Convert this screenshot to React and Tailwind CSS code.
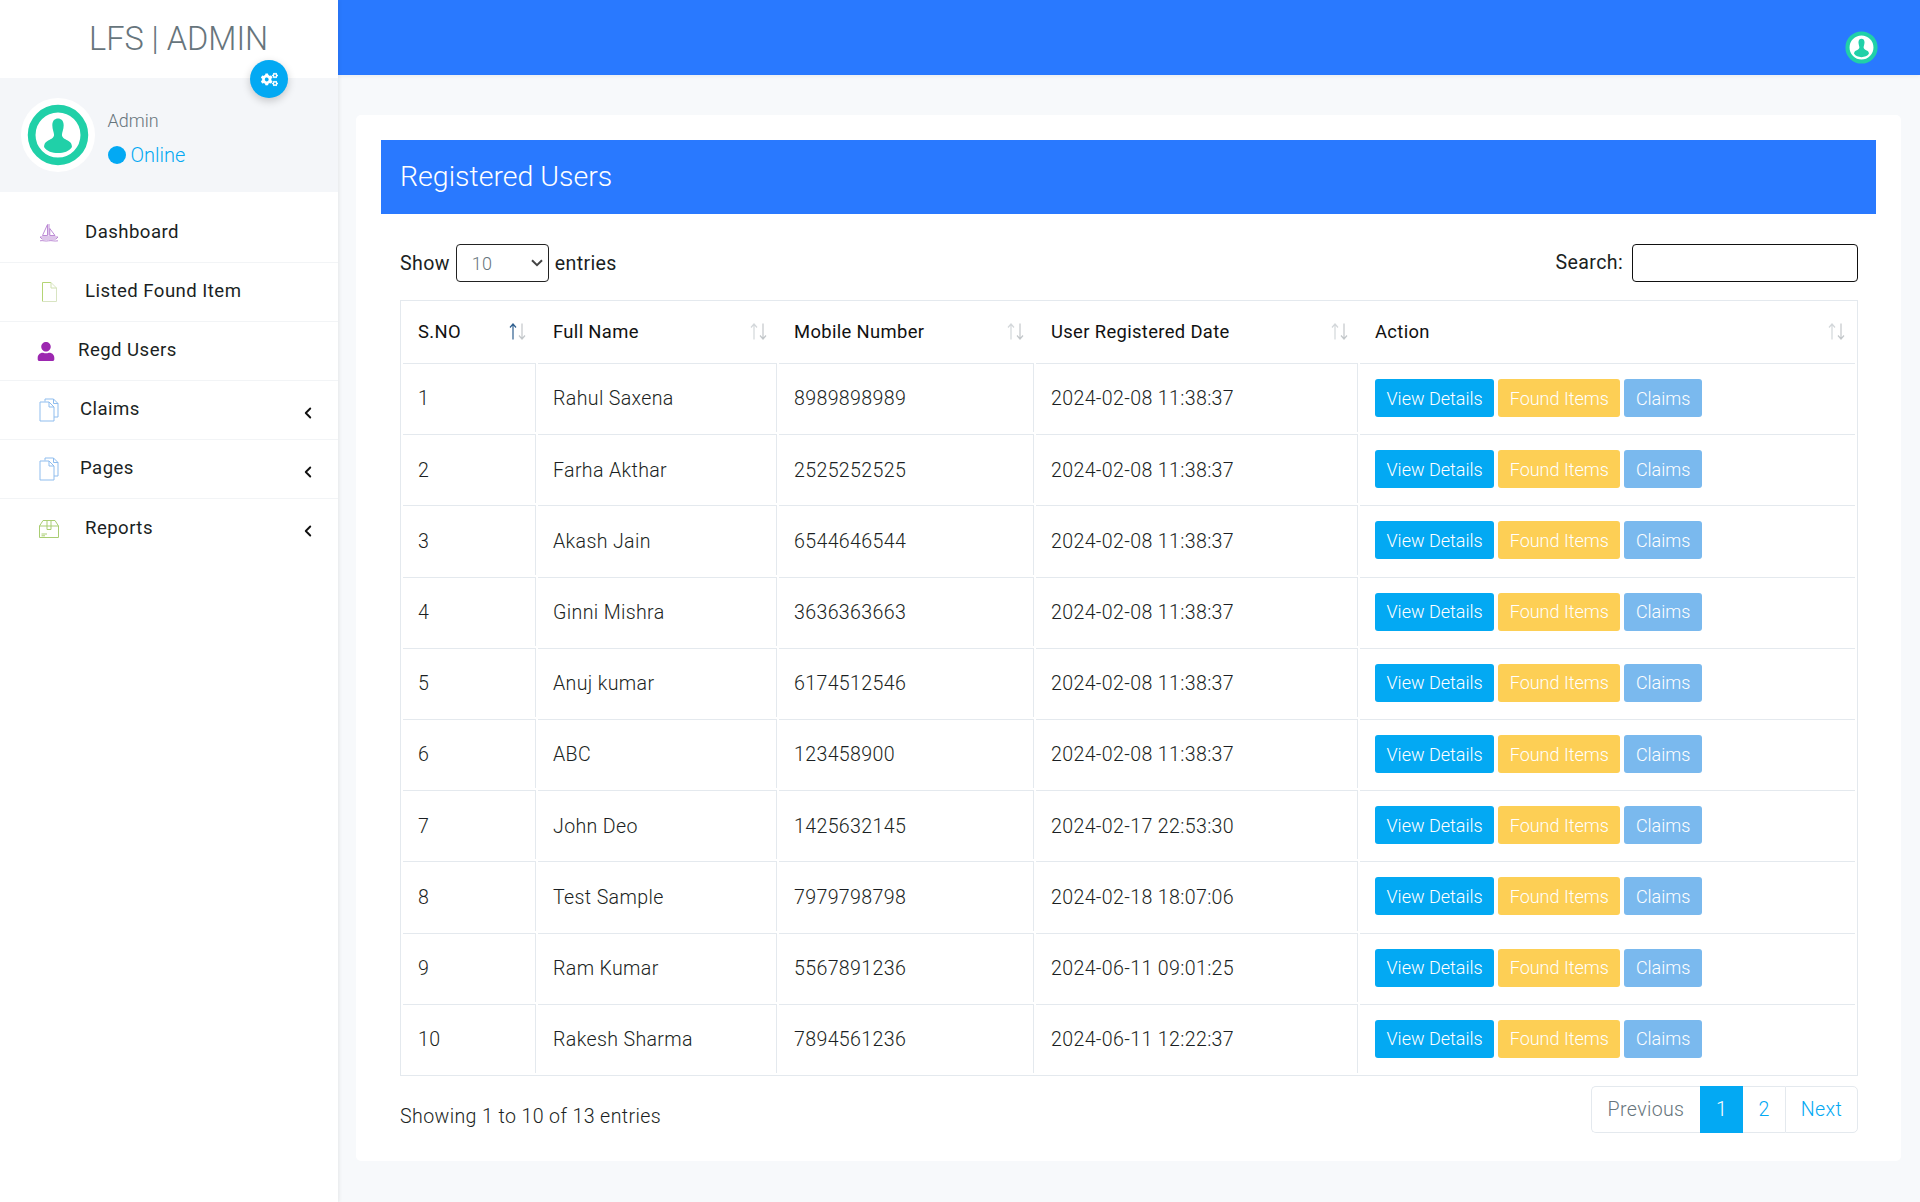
import { FaCogs, FaUser } from "react-icons/fa";
import { FiChevronLeft } from "react-icons/fi";

const USERS = [
  ["1", "Rahul Saxena", "8989898989", "2024-02-08 11:38:37"],
  ["2", "Farha Akthar", "2525252525", "2024-02-08 11:38:37"],
  ["3", "Akash Jain", "6544646544", "2024-02-08 11:38:37"],
  ["4", "Ginni Mishra", "3636363663", "2024-02-08 11:38:37"],
  ["5", "Anuj kumar", "6174512546", "2024-02-08 11:38:37"],
  ["6", "ABC", "123458900", "2024-02-08 11:38:37"],
  ["7", "John Deo", "1425632145", "2024-02-17 22:53:30"],
  ["8", "Test Sample", "7979798798", "2024-02-18 18:07:06"],
  ["9", "Ram Kumar", "5567891236", "2024-06-11 09:01:25"],
  ["10", "Rakesh Sharma", "7894561236", "2024-06-11 12:22:37"],
];

function Avatar({ className }) {
  return (
    <svg viewBox="-30 -30 60 60" className={className}>
      <circle cx="0" cy="0" r="25.5" fill="#fff" stroke="#20d0a8" strokeWidth="7.5" />
      <path
        d="M-5.5 -9.5C-5.5 -14 -3 -16 0 -16C3 -16 5.5 -14 5.5 -9.5C5.5 -5.5 3.8 -2.5 3.8 0C3.8 3 8 4.5 10.5 6C12.5 7.2 13.5 9 13.5 11.5C11 15.5 5.5 17.5 0 17.5C-5.5 17.5 -11 15.5 -13.5 11.5C-13.5 9 -12.5 7.2 -10.5 6C-8 4.5 -3.8 3 -3.8 0C-3.8 -2.5 -5.5 -5.5 -5.5 -9.5Z"
        fill="#20d0a8"
      />
    </svg>
  );
}

function BoatIcon() {
  return (
    <svg viewBox="0 0 20 18" className="w-[20px] h-[18px]" fill="none" stroke="#b57fd0" strokeWidth="0.9">
      <path d="M8.5 0.5L3.5 11.5H8.5Z M10 0V11.5 M10.8 4.5L16 11.5H10.8Z" />
      <path d="M1 13H19L17 15H3Z" />
      <path d="M1 16.8C4 16.1 6 17.6 9.5 16.8C13 16.1 15 17.6 19 16.8" />
    </svg>
  );
}

function FileIcon() {
  return (
    <svg viewBox="0 0 15 20" className="w-[15px] h-[20px]" fill="none" strokeWidth="1">
      <path d="M0.5 19.5V0.5H9" stroke="#b4d474" />
      <path d="M9 0.5L14.5 6V19.5H0.5" stroke="#d8e4c2" />
      <path d="M9 0.5V6H14.5" stroke="#cfe0ae" />
    </svg>
  );
}

function DocsIcon() {
  return (
    <svg viewBox="0 0 20 24" className="w-[20px] h-[24px]" fill="none" stroke="#8fbdee" strokeWidth="1">
      <path d="M6 3.5V1H14.5L19 5.5V19H15" />
      <path d="M1 23V4H10L15 9V23Z" />
      <path d="M10 4V9H15 M14.5 1V5.5H19" />
    </svg>
  );
}

function BoxIcon() {
  return (
    <svg viewBox="0 0 20 18" className="w-[20px] h-[18px]" fill="none" stroke="#a9cd72" strokeWidth="1">
      <path d="M0.5 17.5V6L4 0.5H16L19.5 6V17.5Z" />
      <path d="M0.5 6H19.5 M8 0.5V9.5H12V0.5" />
      <path d="M2.5 14H8 M2.5 15.8H6" />
    </svg>
  );
}

function SortArrows({ active }) {
  return (
    <svg viewBox="0 0 17 17" className="w-[17px] h-[17px] shrink-0" fill="none" strokeWidth="1.2">
      <path d="M4 16.5V1 M1 4.5L4 1L7 4.5" stroke={active ? "#2f5f8f" : "#d3d7da"} />
      <path d="M13 0.5V16 M10 12.5L13 16L16 12.5" stroke="#c3c7ca" />
    </svg>
  );
}

function NavItem({ icon, label, iconBox, gap, chevron, last }) {
  return (
    <div className={`flex items-center h-[59px] pr-[21px] ${last ? "" : "border-b border-[#f2f4f6]"}`}>
      <span className={`flex justify-center shrink-0 ${iconBox}`}>{icon}</span>
      <span className={`text-[18.6px] tracking-[0.45px] text-[#1b1f23] ${gap}`}>{label}</span>
      {chevron && <FiChevronLeft className="ml-auto mt-[5px] text-[#111] w-[18px] h-[18px] stroke-[2.5]" />}
    </div>
  );
}

function ActionButton({ children, color }) {
  return (
    <button type="button" className={`h-[38px] px-[11.5px] rounded-[3px] text-white text-[18px] font-light ${color}`}>
      {children}
    </button>
  );
}

function HeadCell({ children, active }) {
  return (
    <th className="h-[58px] pl-[15px] pr-[10px] text-left font-normal">
      <div className="flex items-center justify-between text-[18.4px] tracking-[0.35px] text-[#111]">
        <span>{children}</span>
        <SortArrows active={active} />
      </div>
    </th>
  );
}

export default function App() {
  return (
    <div className="flex min-h-screen bg-[#f7f9fb] font-[Roboto,sans-serif] overflow-hidden">
      <aside className="w-[338px] shrink-0 bg-white shadow-[1px_0_4px_rgba(0,0,0,0.08)] relative z-10">
        <div className="relative h-[78px] pl-[89px] pt-[19px]">
          <span className="text-[32.5px] leading-[40px] font-light text-[#67757c]">LFS | ADMIN</span>
          <span className="absolute left-[250px] top-[60px] z-20 flex items-center justify-center w-[38px] h-[38px] rounded-full bg-[#03a9f3] text-white shadow-[0_3px_8px_rgba(0,0,0,0.2)]">
            <FaCogs className="w-[17px] h-[17px]" />
          </span>
        </div>
        <div className="flex h-[114px] bg-[#f4f6f9] pl-[21px] items-center">
          <span className="flex items-center justify-center w-[74px] h-[74px] rounded-full bg-white">
            <Avatar className="w-[62px] h-[62px]" />
          </span>
          <div className="ml-[12.5px] pt-[5px]">
            <div className="text-[18px] font-light text-[#67757c] leading-[24px]">Admin</div>
            <div className="flex items-center mt-[10px] text-[20px] font-light text-[#03a9f3] leading-[24px]">
              <span className="w-[18px] h-[18px] rounded-full bg-[#03a9f3] mr-[5px]" />
              Online
            </div>
          </div>
        </div>
        <nav className="pt-[12px]">
          <NavItem icon={<BoatIcon />} label="Dashboard" iconBox="w-[20px] ml-[39px]" gap="ml-[26px]" />
          <NavItem icon={<FileIcon />} label="Listed Found Item" iconBox="w-[20px] ml-[39px]" gap="ml-[26px]" />
          <NavItem icon={<FaUser className="w-[18px] h-[19px] text-[#9c27b0]" />} label="Regd Users" iconBox="w-[20px] ml-[36px]" gap="ml-[22px]" />
          <NavItem icon={<DocsIcon />} label="Claims" iconBox="w-[20px] ml-[39px]" gap="ml-[21px]" chevron />
          <NavItem icon={<DocsIcon />} label="Pages" iconBox="w-[20px] ml-[39px]" gap="ml-[21px]" chevron />
          <NavItem icon={<BoxIcon />} label="Reports" iconBox="w-[20px] ml-[39px]" gap="ml-[26px]" chevron last />
        </nav>
      </aside>

      <div className="flex-1 min-w-0">
        <header className="flex items-center justify-end h-[75px] bg-[#2979ff] pr-[42px] pt-[19px] shadow-[0_1px_4px_rgba(0,0,0,0.06)]">
          <Avatar className="w-[33px] h-[33px]" />
        </header>

        <main className="pt-[40px] pl-[18px] pr-[19px] pb-[41px]">
          <div className="bg-white rounded-[5px] h-[1046px] pl-[25px] pr-[25px] pt-[25px]">
            <div className="flex items-center h-[74px] bg-[#2979ff] pl-[19px] text-[28.5px] font-light text-white">
              Registered Users
            </div>

            <div className="pl-[19px] pr-[18px]">
              <div className="flex items-center justify-between pt-[30px] text-[19.6px] tracking-[0.35px] text-[#1b1f23]">
                <label className="flex items-center">
                  <span className="pt-[1px]">Show</span>
                  <span className="relative ml-[6px] mr-[6px]">
                    <select className="block appearance-none w-[93px] h-[38px] pl-[15px] rounded-[4px] border border-[#222] bg-white text-[18px] font-light text-[#67757c]">
                      <option>10</option>
                    </select>
                    <svg viewBox="0 0 12 8" className="absolute right-[6px] top-[15px] w-[12px] h-[8px]" fill="none" stroke="#444" strokeWidth="2">
                      <path d="M1 1.2L6 6.2L11 1.2" />
                    </svg>
                  </span>
                  <span className="pt-[1px]">entries</span>
                </label>
                <label className="flex items-center">
                  Search:
                  <input type="search" className="w-[226px] h-[38px] ml-[9px] rounded-[4px] border border-[#111] bg-white" />
                </label>
              </div>

              <table className="mt-[18px] w-full table-fixed border border-[#e4e9ee] border-separate border-spacing-[2px]">
                <colgroup>
                  <col className="w-[133px]" />
                  <col className="w-[239px]" />
                  <col className="w-[255px]" />
                  <col className="w-[322px]" />
                  <col />
                </colgroup>
                <thead>
                  <tr>
                    <HeadCell active>S.NO</HeadCell>
                    <HeadCell>Full Name</HeadCell>
                    <HeadCell>Mobile Number</HeadCell>
                    <HeadCell>User Registered Date</HeadCell>
                    <HeadCell>Action</HeadCell>
                  </tr>
                </thead>
                <tbody className="text-[19.6px] tracking-[0.35px] font-light text-[#1b1f23]">
                  {USERS.map((u) => (
                    <tr key={u[0]}>
                      {u.map((val, i) => (
                        <td key={i} className="h-[69.2px] pl-[15px] pt-[2px] border-t border-r border-[#e4e9ee]">
                          {val}
                        </td>
                      ))}
                      <td className="h-[69.2px] pl-[15px] border-t border-[#e4e9ee] tracking-normal">
                        <div className="flex gap-[4px]">
                          <ActionButton color="bg-[#03a9f3]">View Details</ActionButton>
                          <ActionButton color="bg-[#fdcf55]">Found Items</ActionButton>
                          <ActionButton color="bg-[#7ab9ee]">Claims</ActionButton>
                        </div>
                      </td>
                    </tr>
                  ))}
                </tbody>
              </table>

              <div className="flex items-start justify-between pt-[10px]">
                <div className="pt-[19px] text-[19.6px] tracking-[0.38px] font-light text-[#1b1f23] leading-[24px]">
                  Showing 1 to 10 of 13 entries
                </div>
                <div className="flex h-[47px] text-[19.6px] tracking-[0.35px] font-light">
                  <span className="flex items-center justify-center w-[109px] border border-r-0 border-[#e4e9ee] rounded-l-[5px] text-[#67757c]">Previous</span>
                  <span className="flex items-center justify-center w-[43px] bg-[#03a9f3] text-white">1</span>
                  <span className="flex items-center justify-center w-[42px] border-y border-[#e4e9ee] text-[#03a9f3]">2</span>
                  <span className="flex items-center justify-center w-[73px] border border-[#e4e9ee] rounded-r-[5px] text-[#03a9f3]">Next</span>
                </div>
              </div>
            </div>
          </div>
        </main>
      </div>
    </div>
  );
}
